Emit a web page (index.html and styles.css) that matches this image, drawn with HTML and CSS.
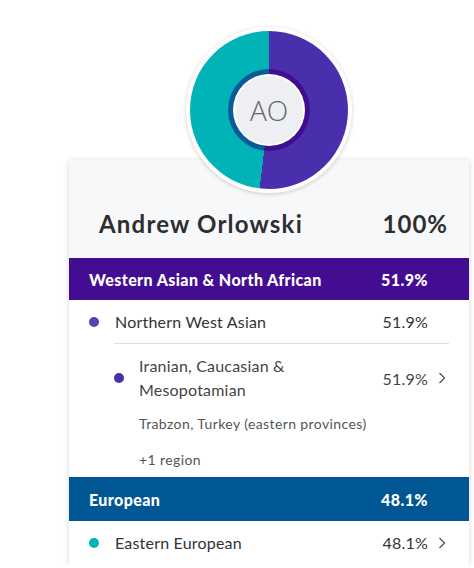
FILE: index.html
```html
<!DOCTYPE html>
<html>
<head>
<meta charset="utf-8">
<link rel="stylesheet" href="styles.css">
</head>
<body>
<div class="wrap">
  <div class="avatar">
    <div class="donut">
      <div class="ring">
        <div class="center">AO</div>
      </div>
    </div>
  </div>
  <div class="card">
    <div class="head">
      <span class="name">Andrew Orlowski</span>
      <span class="total">100%</span>
    </div>
    <div class="band band-purple">
      <span>Western Asian &amp; North African</span>
      <span>51.9%</span>
    </div>
    <div class="row">
      <span class="dot dot-purple"></span>
      <span class="label">Northern West Asian</span>
      <span class="pct">51.9%</span>
    </div>
    <div class="sub">
      <div class="subrow">
        <span class="dot dot-violet"></span>
        <span class="label sublabel">Iranian, Caucasian &amp;<br>Mesopotamian</span>
        <span class="pct light">51.9%</span>
        <svg class="chev" width="8" height="12" viewBox="0 0 8 12"><path d="M1.5 1 L6.5 6 L1.5 11" fill="none" stroke="#555" stroke-width="1.3"/></svg>
      </div>
      <div class="place">Trabzon, Turkey (eastern provinces)</div>
      <div class="place more">+1 region</div>
    </div>
    <div class="band band-blue">
      <span>European</span>
      <span>48.1%</span>
    </div>
    <div class="row last">
      <span class="dot dot-teal"></span>
      <span class="label">Eastern European</span>
      <span class="pct">48.1%</span>
      <svg class="chev" width="8" height="12" viewBox="0 0 8 12"><path d="M1.5 1 L6.5 6 L1.5 11" fill="none" stroke="#555" stroke-width="1.3"/></svg>
    </div>
  </div>
</div>
</body>
</html>
```
FILE: styles.css
```css
html, body {
  margin: 0;
  padding: 0;
  background: #ffffff;
  font-family: Lato, "Noto Sans", sans-serif;
  color: #333;
}
.wrap {
  padding-left: 69px;
  width: 400px;
}
.avatar {
  position: relative;
  z-index: 2;
  width: 166px;
  height: 166px;
  margin: 27px auto 0;
  border-radius: 50%;
  background: #fff;
  box-shadow: 0 1px 4px rgba(0,0,0,0.18);
  display: flex;
  align-items: center;
  justify-content: center;
}
.donut {
  width: 158px;
  height: 158px;
  border-radius: 50%;
  background: conic-gradient(#4a2fac 0 186.8deg, #00b3b7 186.8deg 360deg);
  display: flex;
  align-items: center;
  justify-content: center;
}
.ring {
  width: 82px;
  height: 82px;
  border-radius: 50%;
  background: conic-gradient(#3f0f90 0 186.8deg, #0b5a98 186.8deg 360deg);
  display: flex;
  align-items: center;
  justify-content: center;
}
.center {
  width: 68px;
  height: 68px;
  border-radius: 50%;
  background: #eeeff2;
  box-shadow: 0 0 0 2px #fff;
  display: flex;
  align-items: center;
  justify-content: center;
  font-family: "Open Sans", sans-serif;
  font-weight: 300;
  font-size: 28px;
  color: #666;
}
.card {
  position: relative;
  z-index: 1;
  margin-top: -33px;
  background: #fff;
  box-shadow: 0 1px 6px rgba(0,0,0,0.16);
}
.head {
  background: #f7f8fa;
  display: flex;
  justify-content: space-between;
  align-items: center;
  height: 98px;
  box-sizing: border-box;
  padding: 28px 22px 0 30px;
  font-weight: 700;
  font-size: 24px;
  letter-spacing: 1.2px;
  color: #2e2e2e;
}
.total { letter-spacing: 1px; margin-right: -1px; }
.band {
  display: flex;
  justify-content: space-between;
  align-items: center;
  height: 42px;
  padding: 0 41px 0 20px;
  color: #fff;
  font-weight: 900;
  font-size: 16px;
  letter-spacing: 0.4px;
}
.band-purple { background: #430d93; }
.band-blue { background: #005794; height: 44px; }
.row {
  display: flex;
  align-items: center;
  height: 43px;
  padding: 0 20px 0 20px;
  font-size: 16px;
  letter-spacing: 0.2px;
}
.row.last { height: 43px; padding-bottom: 1px; }
.dot {
  width: 10px;
  height: 10px;
  border-radius: 50%;
  flex: none;
}
.dot-purple { background: #5a3fbb; }
.dot-violet { background: #4a2fac; }
.dot-teal { background: #00b3b7; }
.label {
  margin-left: 16px;
  flex: 1;
  color: #333;
}
.pct {
  color: #333;
  margin-right: 21px;
}
.row.last .pct { margin-right: 0; }
.chev { margin-left: 10px; margin-right: 3px; flex: none; }
.sub {
  margin: 0 20px 0 45px;
  border-top: 1px solid #dedede;
}
.subrow {
  display: flex;
  align-items: center;
  padding: 10px 0 4px 0;
  font-size: 16px;
  letter-spacing: 0.2px;
}
.sublabel {
  line-height: 24px;
  color: #444;
  margin-left: 15px;
}
.subrow .pct { margin-right: 0; color: #444; }
.place {
  padding-left: 25px;
  font-size: 14px;
  letter-spacing: 0.4px;
  color: #555;
  line-height: 18px;
  padding-top: 9px;
  padding-bottom: 9px;
}
.place.more {
  padding-bottom: 8px;
}
```
